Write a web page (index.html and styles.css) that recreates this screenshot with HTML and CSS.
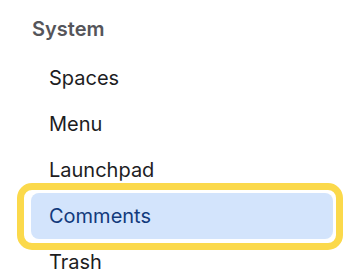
FILE: index.html
```html
<!DOCTYPE html>
<html>
<head>
    <title>System</title>
    <link rel="stylesheet" href="styles.css">
</head>
<body>
    <div class="sidebar">
        <h3 class="section-title">System</h3>
        <ul class="nav-list">
            <li class="nav-item">Spaces</li>
            <li class="nav-item">Menu</li>
            <li class="nav-item">Launchpad</li>
            <li class="nav-item active">Comments</li>
            <li class="nav-item">Trash</li>
        </ul>
    </div>
</body>
</html>
```

FILE: styles.css
```css
body {
    margin: 0;
    font-family: Inter, "Noto Sans", sans-serif;
    background-color: #fff;
    overflow: hidden;
}
.sidebar {
    width: 357px;
}
.section-title {
    margin: 0;
    height: 55px;
    line-height: 59px;
    padding-left: 32px;
    font-size: 20px;
    font-weight: 600;
    color: #55555a;
}
.nav-list {
    list-style: none;
    margin: 0 0 0 31px;
    padding: 0;
    width: 302px;
}
.nav-item {
    position: relative;
    height: 46px;
    line-height: 46px;
    padding-left: 18px;
    font-size: 20px;
    color: #1d1d1f;
    border-radius: 8px;
}
.nav-item.active {
    background-color: #d3e4fc;
    color: #123a7c;
}
.nav-item.active::after {
    content: "";
    position: absolute;
    left: -14px;
    right: -10px;
    top: -10px;
    bottom: -11px;
    border: 7px solid #fbd94b;
    border-radius: 15px;
}
```
